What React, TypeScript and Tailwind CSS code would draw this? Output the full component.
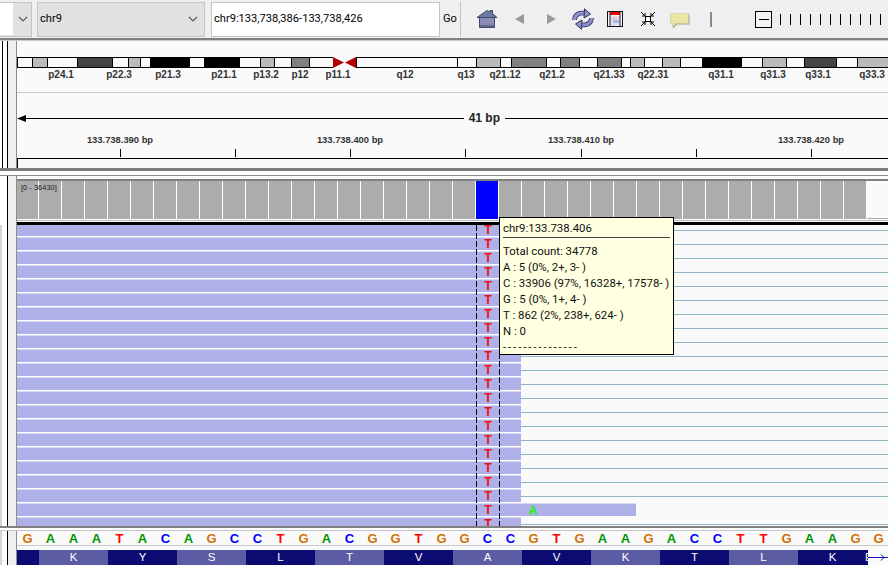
import React from "react";

const SEQ = "GAAATACAGCCTGACGGTGGCCGTGAAGACCTTGAAGG".split("");
const BASE: Record<string, string> = { A: "text-[#009600]", C: "text-[#0000ff]", G: "text-[#d17105]", T: "text-[#ff0000]" };
const AMINO = "KYSLTVAVKTLK".split("");
const W = "bg-[#fafafa]";
const BANDS: [number, string][] = [
  [32, W], [47, "bg-[#bbbbbb]"], [77, W], [112, "bg-[#444444]"], [128, W], [140, "bg-[#bbbbbb]"], [150, W], [189, "bg-black"], [204, W], [239, "bg-black"],
  [260, W], [274, "bg-[#bbbbbb]"], [291, W], [309, "bg-[#808080]"], [333, W],
];
const BANDS2: [number, string][] = [
  [457, W], [476, W], [500, "bg-[#bbbbbb]"], [511, W], [546, "bg-[#808080]"], [560, W], [579, "bg-[#808080]"], [597, W], [621, "bg-[#808080]"], [630, W],
  [644, "bg-[#bbbbbb]"], [662, W], [680, "bg-[#bbbbbb]"], [702, W], [741, "bg-black"], [762, W], [786, "bg-[#bbbbbb]"], [804, W], [836, "bg-[#444444]"], [857, W], [889, "bg-[#bbbbbb]"],
];
const CYTO: [string, number][] = [
  ["p24.1", 61], ["p22.3", 119], ["p21.3", 168], ["p21.1", 224], ["p13.2", 266], ["p12", 300], ["p11.1", 338], ["q12", 405], ["q13", 466], ["q21.12", 505],
  ["q21.2", 552], ["q21.33", 609], ["q22.31", 653], ["q31.1", 721], ["q31.3", 773], ["q33.1", 818], ["q33.3", 872],
];
const RULER: [string, number][] = [["133.738.390 bp", 120], ["133.738.400 bp", 350], ["133.738.410 bp", 581], ["133.738.420 bp", 811]];
const TICKS = [120, 235, 350, 465, 581, 696, 811];
const sans = "font-['Roboto','Noto_Sans',sans-serif]";
const arial = "font-['Liberation_Sans',Arial,sans-serif]";

function Gutter({ second = true, soft = false }: { second?: boolean; soft?: boolean }) {
  return (
    <div className="flex w-[17px] shrink-0 self-stretch">
      <div className={`w-[2px] ${soft ? "bg-[#d4d4d4]" : "bg-white"}`} />
      <div className={`w-px ${second ? "bg-black" : "bg-white"}`} />
      <div className="w-[4px] bg-white" />
      <div className="w-px bg-black" />
      <div className="w-[8px] bg-[#efefef]" />
      <div className="w-px bg-[#8c8c8c]" />
    </div>
  );
}

function Chevron() {
  return (
    <svg width="10" height="6" viewBox="0 0 10 6" className="shrink-0">
      <path d="M1 1l4 4 4-4" fill="none" stroke="#555" strokeWidth="1.1" />
    </svg>
  );
}

function Bands({ data, start }: { data: [number, string][]; start: number }) {
  let prev = start;
  return (
    <>
      {data.map(([end, c], i) => {
        const w = end - prev;
        prev = end;
        return <div key={i} className={`${c} h-full border-l border-black shrink-0`} style={{ width: w }} />;
      })}
    </>
  );
}

function Toolbar() {
  return (
    <div className="flex h-[38px] items-center bg-[#efefef] shrink-0">
      <div className="flex h-[35px] w-[32px] items-center border border-[#c4c4c4] bg-[#e1e1e1] border-l-0 shrink-0">
        <div className="h-[32px] w-[13px] bg-white shrink-0" />
        <div className="ml-[5px]"><Chevron /></div>
      </div>
      <div className={`ml-[5px] flex h-[35px] w-[168px] items-center justify-between border border-[#c4c4c4] bg-[#e1e1e1] pl-[2px] pr-[6px] shrink-0 text-[11.1px] text-black ${sans}`}>
        <span>chr9</span>
        <Chevron />
      </div>
      <div className={`ml-[6px] flex h-[35px] w-[229px] items-center border border-[#c4c4c4] bg-white pl-[2px] shrink-0 text-[11.1px] text-black ${sans}`}>
        chr9:133,738,386-133,738,426
      </div>
      <div className={`flex h-[35px] w-[21px] items-center justify-center border-r border-[#c4c4c4] bg-[#efefef] shrink-0 text-[11.1px] text-black ${sans}`}>Go</div>

      <svg width="22" height="20" viewBox="0 0 22 20" className="ml-[15px] shrink-0">
        <path d="M3.5 8.5h15v10h-15z" fill="#8b8bb8" stroke="#3c4a6a" />
        <path d="M1 8.5L11 1.5l3 1.7V1.5h2.5v3.3L21 8.5z" fill="#6c7aa8" stroke="#3c4a6a" />
        <path d="M3.5 17h15" stroke="#3c4a6a" />
      </svg>
      <svg width="9" height="10" viewBox="0 0 9 10" className="ml-[17px] shrink-0"><path d="M9 0v10L0 5z" fill="#9a9a9a" /></svg>
      <svg width="9" height="10" viewBox="0 0 9 10" className="ml-[23px] shrink-0"><path d="M0 0v10l9-5z" fill="#9a9a9a" /></svg>
      <svg width="22" height="22" viewBox="0 0 22 22" className="ml-[16px] shrink-0">
        <g fill="none" strokeLinecap="butt">
          <path d="M2.5 12C2.5 6.5 8 4 13 5.5" stroke="#2f2f5c" strokeWidth="4.6" />
          <path d="M19.5 10C19.5 15.5 14 18 9 16.5" stroke="#2f2f5c" strokeWidth="4.6" />
          <path d="M2.5 12C2.5 6.5 8 4 13 5.5" stroke="#9090d0" strokeWidth="3" />
          <path d="M19.5 10C19.5 15.5 14 18 9 16.5" stroke="#9090d0" strokeWidth="3" />
        </g>
        <path d="M12.5 0.8L18.5 6l-6.5 4z" fill="#9090d0" stroke="#2f2f5c" />
        <path d="M9.5 21.2L3.5 16l6.5-4z" fill="#9090d0" stroke="#2f2f5c" />
      </svg>
      <svg width="16" height="16" viewBox="0 0 16 16" className="ml-[13px] shrink-0">
        <rect x="0.5" y="0.5" width="15" height="15" fill="#f4f4fb" stroke="#111" />
        <rect x="3" y="1" width="10" height="3" fill="#f00000" />
        <rect x="3" y="5" width="10" height="10" fill="#dfe0f5" />
        <rect x="5" y="6" width="5" height="3" fill="#f3c4d0" />
        <rect x="6" y="9" width="6" height="3" fill="#aab4ea" />
        <path d="M3 0v16M13 0v16" stroke="#222" />
      </svg>
      <svg width="14" height="14" viewBox="0 0 14 14" className="ml-[18px] shrink-0">
        <rect x="4.5" y="4.5" width="5" height="5" fill="#fff" stroke="#000" />
        <path d="M0 0l4 4M14 0l-4 4M0 14l4-4M14 14l-4-4" stroke="#000" />
        <path d="M4 1v3H1M10 1v3h3M4 13v-3H1M10 13v-3h3" fill="none" stroke="#000" />
      </svg>
      <svg width="20" height="16" viewBox="0 0 20 16" className="ml-[15px] mt-[4px] shrink-0">
        <path d="M1.5 1.5h18v10H7L3 15.5v-4H1.5z" fill="#a0a0a0" />
        <path d="M0.5 0.5h18v10H6L2.5 14v-3.5h-2z" fill="#ece6a6" stroke="#c8c49a" strokeWidth="0.6" />
      </svg>
      <div className="ml-[20px] h-[15px] w-[2px] bg-[#8a8a8a] shrink-0" />
      <div className="ml-[43px] flex h-[17px] w-[17px] items-center justify-center border border-black bg-[#f4f4f4] shrink-0">
        <div className="h-px w-[10px] bg-black" />
      </div>
      <div className="ml-[8px] flex shrink-0 gap-[9px]">
        {Array.from({ length: 11 }).map((_, i) => <div key={i} className="h-[11px] w-px bg-black" />)}
      </div>
    </div>
  );
}

function Header() {
  let prevC = 17;
  let prevR = 17;
  let prevT = 17;
  return (
    <div className="flex h-[127px] shrink-0">
      <Gutter />
      <div className={`flex-1 min-w-0 overflow-hidden ${W}`}>
        <div className="flex h-[11px] mt-[16px] border-y border-black w-[872px]">
          <Bands data={BANDS} start={17} />
          <svg width="23" height="11" viewBox="0 0 23 11" className="-my-px shrink-0 bg-[#fafafa]">
            <path d="M0 0l11 5.5L0 11zM23 0L12 5.5 23 11z" fill="#b00000" />
          </svg>
          <Bands data={BANDS2} start={356} />
        </div>
        <div className={`flex h-[13px] items-center text-[10px] font-bold text-[#333] ${arial}`}>
          {CYTO.map(([t, c]) => {
            const m = c - prevC;
            prevC = c;
            return <div key={t} className="flex w-0 justify-center whitespace-nowrap" style={{ marginLeft: m }}>{t}</div>;
          })}
        </div>
        <div className="mt-[11px] h-px bg-[#c8c8d4]" />
        <div className="mt-[15px] flex h-[20px] items-center">
          <svg width="9" height="7" viewBox="0 0 9 7" className="shrink-0"><path d="M0 3.5L9 0v7z" fill="#000" /></svg>
          <div className="h-px flex-1 bg-black" />
          <div className={`px-[5px] text-[12px] font-bold text-[#222] ${arial}`}>41 bp</div>
          <div className="h-px w-[383px] bg-black" />
        </div>
        <div className={`mt-[4px] flex h-[16px] items-center text-[9.4px] font-bold text-[#333] ${arial}`}>
          {RULER.map(([t, c]) => {
            const m = c - prevR;
            prevR = c;
            return <div key={t} className="flex w-0 justify-center whitespace-nowrap" style={{ marginLeft: m }}>{t}</div>;
          })}
        </div>
        <div className="flex h-[10px]">
          {TICKS.map((c) => {
            const m = c - prevT;
            prevT = c + 1;
            return <div key={c} className="h-[8px] mt-[1px] w-px bg-black" style={{ marginLeft: m }} />;
          })}
        </div>
        <div className="h-[10px] border-t border-l border-black" />
      </div>
    </div>
  );
}

function Coverage() {
  return (
    <div className="flex h-[49px] shrink-0">
      <Gutter second={false} />
      <div className={`flex-1 min-w-0 ${W}`}>
        <div className="mt-[3px] h-[2px] bg-[#808080]" />
        <div className="flex h-[38px]">
          <div className="relative h-full w-[22px] shrink-0 border-r border-white bg-[#acacac]">
            <span className={`absolute left-[4px] top-[2px] whitespace-nowrap text-[7.5px] leading-[10px] text-[#222] ${arial}`}>[0 - 36430]</span>
          </div>
          {Array.from({ length: 36 }).map((_, i) => (
            <div key={i} className={`h-full w-[23px] shrink-0 border-r border-white ${i === 19 ? "bg-[#0000ff]" : "bg-[#acacac]"}`} />
          ))}
          <div className="flex-1 self-end h-px bg-[#aaaaaa]" />
        </div>
        <div className="h-px bg-white" />
        <div className="h-px bg-[#bbbbbb]" />
        <div className="h-[3px] bg-black mt-px" />
      </div>
    </div>
  );
}

function Reads() {
  return (
    <div className="flex h-[301px] shrink-0">
      <Gutter second={false} soft />
      <div className={`relative flex-1 min-w-0 overflow-hidden ${W}`}>
        <div className="-mt-[2px]">
          {Array.from({ length: 22 }).map((_, i) => (
            <div key={i} className="flex h-[14px]">
              <div className={`flex h-[14px] shrink-0 items-center border-t border-b border-t-[#d8d8f4] border-b-white bg-[#b0b0e8] ${i === 20 ? "w-[619px]" : "w-[504px]"}`}>
                <div className={`ml-[460px] w-[22px] text-center text-[12.5px] font-bold leading-none text-[#ee1111] ${arial}`}>T</div>
                {i === 20 && <div className={`ml-[28px] w-[12px] text-center text-[13px] font-bold leading-none text-[#22ee22] ${arial}`}>A</div>}
              </div>
              {i !== 20 && <div className="mt-[7px] h-px flex-1 bg-[#8eb8c8]" />}
            </div>
          ))}
        </div>
        <div className="absolute left-[459px] top-0 bottom-0 w-px bg-[repeating-linear-gradient(to_bottom,#000_0,#000_6px,transparent_6px,transparent_8px)]" />
        <div className="absolute left-[482px] top-0 bottom-0 w-px bg-[repeating-linear-gradient(to_bottom,#000_0,#000_6px,transparent_6px,transparent_8px)]" />
      </div>
    </div>
  );
}

function Sequence() {
  return (
    <div className="flex flex-1 min-h-0">
      <Gutter second={false} soft />
      <div className={`flex-1 min-w-0 overflow-hidden ${W}`}>
        <div className="flex h-[14px] w-[880px]">
          {SEQ.map((b, i) => (
            <div key={i} className={`w-[23px] shrink-0 text-center text-[13px] font-bold leading-[16px] ${BASE[b]} ${arial} ${i === 0 ? "ml-[-1px]" : ""}`}>{b}</div>
          ))}
        </div>
        <div className="h-px bg-[#c8c8c8]" />
        <div className="mt-[4px] flex h-[15px] items-center">
          <div className="h-full w-[22px] shrink-0 bg-[#0b0b72]" />
          {AMINO.map((a, i) => (
            <div key={i} className={`flex h-full w-[69px] shrink-0 items-center justify-center text-[11.5px] text-white ${arial} ${i % 2 === 0 ? "bg-[#5c5ca5]" : "bg-[#0b0b72]"}`}>{a}</div>
          ))}
          <div className={`flex h-full w-[1px] shrink-0 items-center bg-[#0b0b72] text-[11.5px] text-white ${arial}`}>
            <span className="-ml-[2px]">E</span>
          </div>
          <svg width="20" height="9" viewBox="0 0 20 9" className="shrink-0">
            <path d="M0 4.5h20M13 1.5l3 3-3 3" fill="none" stroke="#1010c0" />
          </svg>
        </div>
      </div>
    </div>
  );
}

export default function App() {
  return (
    <div className="relative flex h-[565px] w-[888px] flex-col overflow-hidden bg-white">
      <Toolbar />
      <div className="h-[2px] bg-[#808080] shrink-0" />
      <div className="h-px bg-[#cccccc] shrink-0" />
      <Header />
      <div className="h-[3px] bg-[#7c7c7c] shrink-0" />
      <div className="h-[4px] shrink-0" />
      <div className="h-px bg-[#888888] shrink-0" />
      <Coverage />
      <Reads />
      <div className="h-[2px] bg-[#808080] shrink-0" />
      <div className="h-[2px] shrink-0" />
      <div className="h-px bg-[#c8c8c8] shrink-0" />
      <Sequence />
      <div className={`absolute left-[499px] top-[217px] h-[138px] w-[175px] border border-black bg-[#ffffe1] px-[3px] pt-[2px] text-[11.4px] leading-[16px] text-[#111] ${sans}`}>
        <div>chr9:133.738.406</div>
        <div className="mb-[5px] mt-[1px] h-px bg-[#444444]" />
        <div>Total count: 34778</div>
        <div>A : 5 (0%, 2+, 3- )</div>
        <div className="whitespace-nowrap">C : 33906 (97%, 16328+, 17578- )</div>
        <div>G : 5 (0%, 1+, 4- )</div>
        <div>T : 862 (2%, 238+, 624- )</div>
        <div>N : 0</div>
        <div className="tracking-[1.9px]">---------------</div>
      </div>
    </div>
  );
}
